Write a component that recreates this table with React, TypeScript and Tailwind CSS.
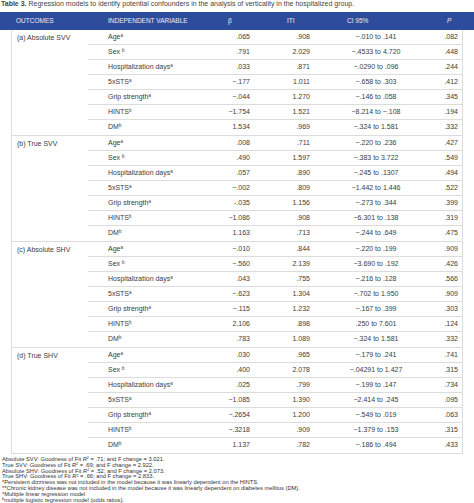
import React from "react";

type Row = { v: string; s: string; sp?: boolean; b: string; t: string; ci: string; p: string };
type Group = { name: string; rows: Row[] };

const groups: Group[] = [
  {
    name: "(a) Absolute SVV",
    rows: [
      { v: "Age", s: "a", b: ".065", t: ".908", ci: "−.010 to .141", p: ".082" },
      { v: "Sex", s: "b", sp: true, b: ".791", t: "2.029", ci: "−.4533 to 4.720", p: ".448" },
      { v: "Hospitalization days", s: "a", b: ".033", t: ".871", ci: "−.0290 to .096", p: ".244" },
      { v: "5xSTS", s: "a", b: "−.177", t: "1.011", ci: "−.658 to .303", p: ".412" },
      { v: "Grip strength", s: "a", b: "−.044", t: "1.270", ci: "−.146 to .058", p: ".345" },
      { v: "HINTS", s: "b", b: "−1.754", t: "1.521", ci: "−8.214 to −.108", p: ".194" },
      { v: "DM", s: "b", b: "1.534", t: ".969", ci: "−.324 to 1.581", p: ".332" },
    ],
  },
  {
    name: "(b) True SVV",
    rows: [
      { v: "Age", s: "a", b: ".008", t: ".711", ci: "−.220 to .236", p: ".427" },
      { v: "Sex", s: "b", sp: true, b: ".490", t: "1.597", ci: "−.383 to 3.722", p: ".549" },
      { v: "Hospitalization days", s: "a", b: ".057", t: ".890", ci: "−.245 to .1307", p: ".494" },
      { v: "5xSTS", s: "a", b: "−.002", t: ".809", ci: "−1.442 to 1.446", p: ".522" },
      { v: "Grip strength", s: "a", b: "-.035", t: "1.156", ci: "−.273 to .344", p: ".399" },
      { v: "HINTS", s: "b", b: "−1.086", t: ".908", ci: "−6.301 to .138", p: ".319" },
      { v: "DM", s: "b", b: "1.163", t: ".713", ci: "−.244 to .649", p: ".475" },
    ],
  },
  {
    name: "(c) Absolute SHV",
    rows: [
      { v: "Age", s: "a", b: "−.010", t: ".844", ci: "−.220 to .199", p: ".909" },
      { v: "Sex", s: "b", sp: true, b: "−.560", t: "2.139", ci: "−3.690 to .192", p: ".426" },
      { v: "Hospitalization days", s: "a", b: ".043", t: ".755", ci: "−.216 to .128", p: ".566" },
      { v: "5xSTS", s: "a", b: "−.623", t: "1.304", ci: "−.702 to 1.950", p: ".909" },
      { v: "Grip strength", s: "a", b: "−.115", t: "1.232", ci: "−.167 to .399", p: ".303" },
      { v: "HINTS", s: "b", b: "2.106", t: ".898", ci: ".250 to 7.601", p: ".124" },
      { v: "DM", s: "b", b: ".783", t: "1.089", ci: "−.324 to 1.581", p: ".332" },
    ],
  },
  {
    name: "(d) True SHV",
    rows: [
      { v: "Age", s: "a", b: ".030", t: ".965", ci: "−.179 to .241", p: ".741" },
      { v: "Sex", s: "b", sp: true, b: ".400", t: "2.078", ci: "−.04291 to 1.427", p: ".315" },
      { v: "Hospitalization days", s: "a", b: ".025", t: ".799", ci: "−.199 to .147", p: ".734" },
      { v: "5xSTS", s: "a", b: "−1.085", t: "1.390", ci: "−2.414 to .245", p: ".095" },
      { v: "Grip strength", s: "a", b: "−.2654", t: "1.200", ci: "−.549 to .019", p: ".063" },
      { v: "HINTS", s: "b", b: "−.3218", t: ".909", ci: "−1.379 to .153", p: ".315" },
      { v: "DM", s: "b", b: "1.137", t: ".782", ci: "−.186 to .494", p: ".433" },
    ],
  },
];

const fits = [
  ["Absolute SVV", ".71", "3.021"],
  ["True SVV", ".69", "2.922"],
  ["Absolute SHV", ".52", "2.073"],
  ["True SHV", ".66", "2.833"],
];

function DataRow({ r, last }: { r: Row; last: boolean }) {
  return (
    <div className={`flex h-[15px] items-center ${last ? "" : "border-b border-[#dcdcdc]"}`}>
      <div className="w-[112px] pl-[20px]">
        {r.v}
        {r.sp ? " " : ""}
        <sup className="text-[4.5px]">{r.s}</sup>
      </div>
      <div className="w-[50px] text-right">{r.b}</div>
      <div className="w-[60px] text-right">{r.t}</div>
      <div className="w-[132px] text-center">{r.ci}</div>
      <div className="w-[16px] text-right">{r.p}</div>
    </div>
  );
}

export default function App() {
  return (
    <div className="h-[503px] w-[474px] overflow-hidden bg-white font-['Liberation_Sans',Arial,sans-serif] text-[#3c3c3c]">
      <div className="mb-[4px] mt-[-1px] h-[9px] pl-[1px] text-[7px] leading-[9px] text-[#444]">
        <span className="font-bold">Table 3.</span> Regression models to identify potential confounders in the analysis of verticality in the hospitalized group.
      </div>
      <div className="flex h-[18px] items-center bg-[#2d4c9c] text-[6.5px] text-white/90">
        <div className="w-[108px] pl-[16px]">OUTCOMES</div>
        <div className="w-[120px]">INDEPENDENT VARIABLE</div>
        <div className="w-[59px]">β</div>
        <div className="w-[60px]">ITI</div>
        <div className="w-[100px]">CI 95%</div>
        <div className="italic">P</div>
      </div>
      <div className="mx-[11px] w-[452px] border-x border-[#dcdcdc] text-[7px]">
        {groups.map((g) => (
          <div key={g.name} className="flex border-b border-[#dcdcdc]">
            <div className="w-[76px] pl-[5px] pt-[3px] leading-[9px]">{g.name}</div>
            <div className="flex-1">
              {g.rows.map((r, i) => (
                <DataRow key={r.v} r={r} last={i === g.rows.length - 1} />
              ))}
            </div>
          </div>
        ))}
      </div>
      <div className="mt-[3px] pl-[2px] text-[5.75px] leading-[5.8px] text-[#333]">
        {fits.map(([n, r2, f]) => (
          <div key={n}>
            {n}: Goodness of Fit <i>R</i>
            <sup className="text-[3.8px]">2</sup> = {r2}; and F change = {f}.
          </div>
        ))}
        <div>*Persistent dizziness was not included in the model because it was linearly dependent on the HINTS.</div>
        <div>**Chronic kidney disease was not included in the model because it was linearly dependent on diabetes mellitus (DM).</div>
        <div>
          <sup className="text-[3.8px]">a</sup>Multiple linear regression model
        </div>
        <div>
          <sup className="text-[3.8px]">b</sup>multiple logistic regression model (odds ratios).
        </div>
      </div>
    </div>
  );
}
